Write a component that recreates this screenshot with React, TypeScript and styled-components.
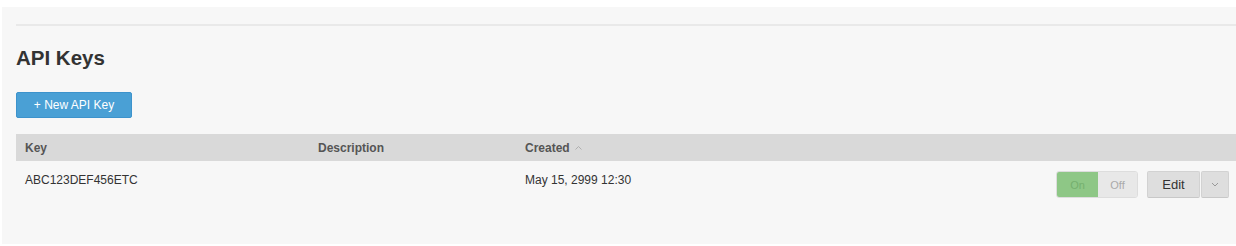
import React from "react";
import styled, { createGlobalStyle } from "styled-components";

const GlobalStyle = createGlobalStyle`
  html, body {
    margin: 0;
    padding: 0;
    background: #ffffff;
    font-family: "Liberation Sans", Arial, sans-serif;
  }
`;

const Page = styled.div`
  margin: 7px 0 2px 2px;
  height: 237px;
  background: #f7f7f7;
  padding: 17px 0 0 14px;
  box-sizing: border-box;
`;

const Rule = styled.hr`
  margin: 0;
  border: 0;
  border-top: 2px solid #e9e9e9;
`;

const Title = styled.h1`
  margin: 20px 0 0;
  font-size: 20.5px;
  font-weight: bold;
  color: #333333;
  line-height: 24px;
`;

const PrimaryButton = styled.button`
  margin-top: 22px;
  height: 26px;
  width: 116px;
  padding: 0;
  border: 1px solid #3d93cc;
  border-radius: 2px;
  background: #4aa0d5;
  color: #ffffff;
  font-family: inherit;
  font-size: 12px;
`;

const Table = styled.div`
  margin-top: 16px;
`;

const Row = styled.div<{ $head?: boolean }>`
  display: grid;
  grid-template-columns: 293px 207px 1fr auto;
  align-items: ${p => (p.$head ? "center" : "start")};
  height: ${p => (p.$head ? "27px" : "42px")};
  padding-top: ${p => (p.$head ? "0" : "10px")};
  box-sizing: border-box;
  background: ${p => (p.$head ? "#d9d9d9" : "transparent")};
  font-size: 12px;
  font-weight: ${p => (p.$head ? "bold" : "normal")};
  color: ${p => (p.$head ? "#555555" : "#333333")};
`;

const Cell = styled.div<{ $top?: number }>`
  padding: ${p => p.$top ?? 0}px 0 0 9px;
  display: flex;
  align-items: center;
  gap: 5px;
  line-height: 14px;
`;

const Actions = styled.div`
  display: flex;
  align-items: center;
  gap: 9px;
  padding-right: 7px;
`;

const Toggle = styled.div`
  display: flex;
  height: 27px;
  border-radius: 3px;
  overflow: hidden;
  border: 1px solid #dddddd;
  box-sizing: border-box;
`;

const ToggleSide = styled.span<{ $on?: boolean }>`
  display: flex;
  align-items: center;
  justify-content: center;
  width: ${p => (p.$on ? "41px" : "39px")};
  background: ${p => (p.$on ? "#8ec786" : "#e8e8e8")};
  color: ${p => (p.$on ? "#75b06e" : "#aaaaaa")};
  font-size: 11px;
`;

const SplitButton = styled.div`
  display: flex;
  gap: 1px;
  height: 27px;
`;

const GrayButton = styled.button<{ $w: number }>`
  width: ${p => p.$w}px;
  padding: 0;
  border: 1px solid #d2d2d2;
  border-bottom-color: #c8c8c8;
  border-radius: 2px;
  background: #dedede;
  color: #333333;
  font-family: inherit;
  font-size: 13px;
  display: flex;
  align-items: center;
  justify-content: center;
`;

const App: React.FC = () => {
  return (
    <>
      <GlobalStyle />
      <Page>
        <Rule />
        <Title>API Keys</Title>
        <PrimaryButton>+ New API Key</PrimaryButton>
        <Table>
          <Row $head>
            <Cell>Key</Cell>
            <Cell>Description</Cell>
            <Cell>
              Created
              <svg width="7" height="4" viewBox="0 0 7 4">
                <path d="M0.5 3.5l3-3 3 3" fill="none" stroke="#aaa" strokeWidth="0.9" />
              </svg>
            </Cell>
            <Cell />
          </Row>
          <Row>
            <Cell $top={2}>ABC123DEF456ETC</Cell>
            <Cell />
            <Cell $top={2}>May 15, 2999 12:30</Cell>
            <Actions>
              <Toggle>
                <ToggleSide $on>On</ToggleSide>
                <ToggleSide>Off</ToggleSide>
              </Toggle>
              <SplitButton>
                <GrayButton $w={53}>Edit</GrayButton>
                <GrayButton $w={28}>
                  <svg width="8" height="5" viewBox="0 0 8 5">
                    <path d="M1 1l3 3 3-3" fill="none" stroke="#999" strokeWidth="1" />
                  </svg>
                </GrayButton>
              </SplitButton>
            </Actions>
          </Row>
        </Table>
      </Page>
    </>
  );
};

export default App;
